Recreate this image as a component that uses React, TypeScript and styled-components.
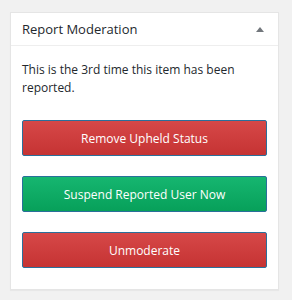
import React from "react";
import styled, { createGlobalStyle } from "styled-components";

const GlobalStyle = createGlobalStyle`
  html, body {
    margin: 0;
    padding: 0;
    background: #f1f1f1;
  }
  body {
    font-family: "Open Sans", "Noto Sans", sans-serif;
    color: #23282d;
  }
`;

const Page = styled.div`
  padding: 12px 13px 10px 10px;
`;

const Box = styled.div`
  width: 269px;
  box-sizing: border-box;
  background: #fff;
  border: 1px solid #e5e5e5;
  box-shadow: 0 1px 1px rgba(0, 0, 0, 0.04);
`;

const Header = styled.div`
  height: 32px;
  display: flex;
  align-items: center;
  justify-content: space-between;
  padding: 0 14px 0 11px;
  border-bottom: 1px solid #eee;
`;

const Title = styled.h2`
  margin: 0;
  font-size: 13px;
  font-weight: 400;
  color: #23282d;
`;

const Toggle = styled.span`
  width: 0;
  height: 0;
  border-left: 4px solid transparent;
  border-right: 4px solid transparent;
  border-bottom: 5px solid #72777c;
`;

const Body = styled.div`
  padding: 15px 11px 21px 11px;
  display: flex;
  flex-direction: column;
`;

const Notice = styled.p`
  margin: 0 0 23px;
  font-size: 12px;
  line-height: 18px;
  color: #23282d;
`;

const Actions = styled.div`
  display: flex;
  flex-direction: column;
  gap: 20px;
`;

const Button = styled.button<{ $tone: "red" | "green" }>`
  height: 36px;
  width: 100%;
  border: 1px solid #2a6f9a;
  border-radius: 2px;
  font-family: inherit;
  font-size: 12px;
  color: #fff;
  cursor: pointer;
  background: ${(p) =>
    p.$tone === "red"
      ? "linear-gradient(#d64848, #c53333)"
      : "linear-gradient(#16b670, #07a05a)"};
`;

export default function App() {
  return (
    <Page>
      <GlobalStyle />
      <Box>
        <Header>
          <Title>Report Moderation</Title>
          <Toggle />
        </Header>
        <Body>
          <Notice>This is the 3rd time this item has been reported.</Notice>
          <Actions>
            <Button $tone="red">Remove Upheld Status</Button>
            <Button $tone="green">Suspend Reported User Now</Button>
            <Button $tone="red">Unmoderate</Button>
          </Actions>
        </Body>
      </Box>
    </Page>
  );
}
